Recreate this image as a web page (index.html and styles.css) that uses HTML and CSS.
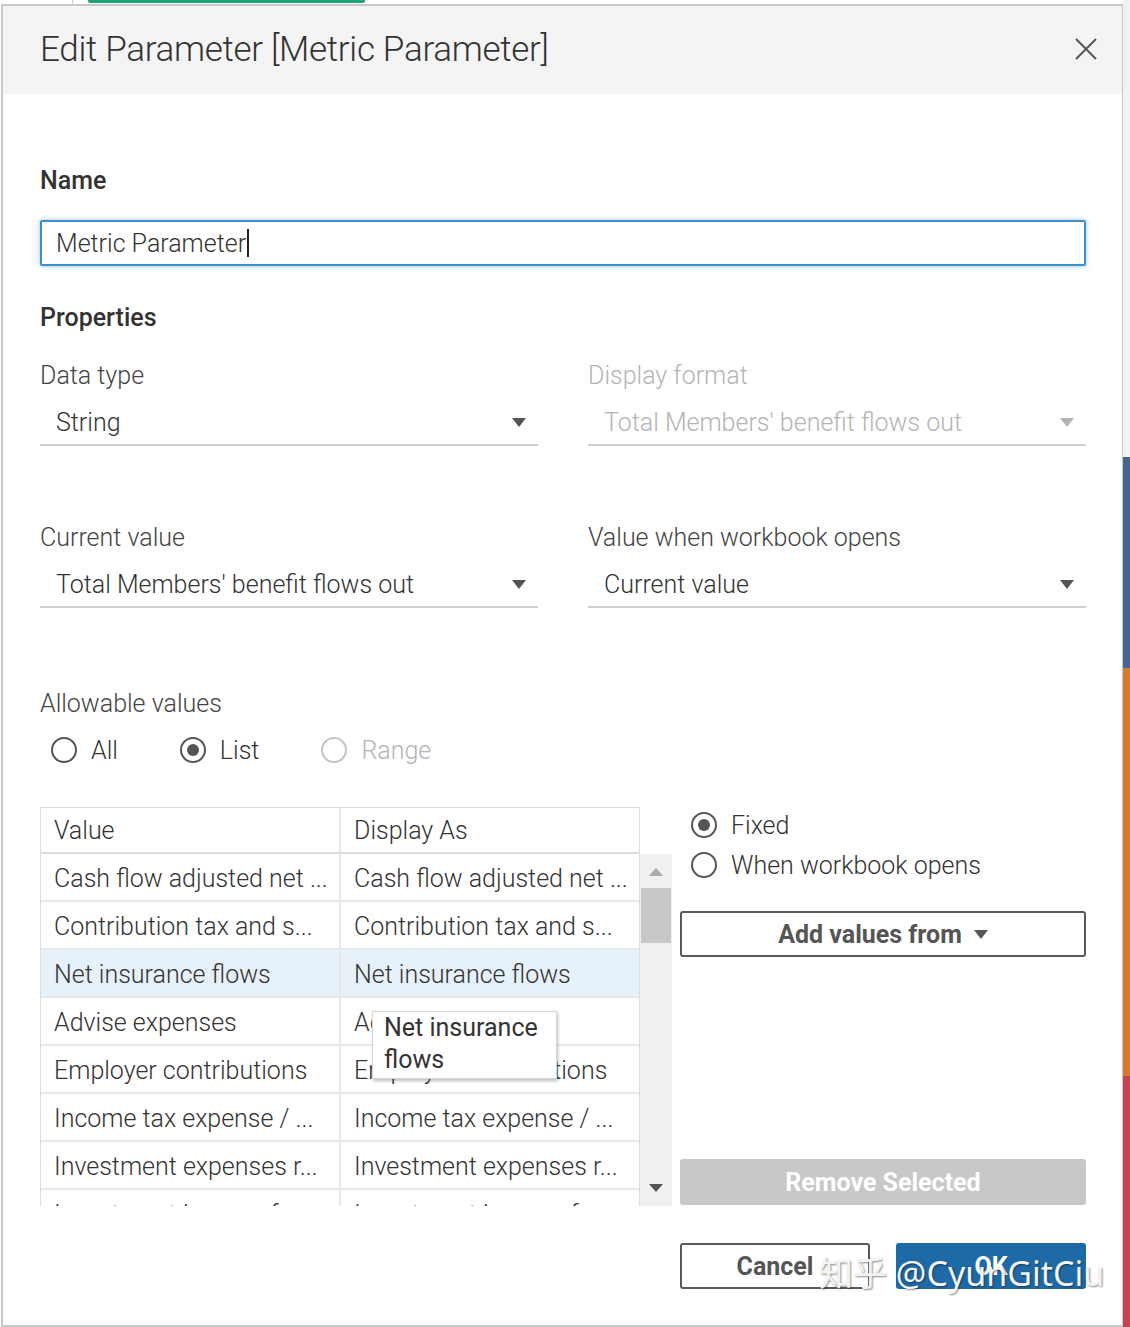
FILE: index.html
```html
<!DOCTYPE html>
<html lang="en">
<head>
    <meta charset="UTF-8">
    <title>Edit Parameter</title>
    <link rel="stylesheet" href="styles.css">
</head>
<body>
    <div class="backdrop-top">
        <div class="back-line"></div>
        <div class="back-tab"></div>
    </div>
    <div class="page">
        <div class="dialog">
            <div class="dialog-header">
                <h1>Edit Parameter [Metric Parameter]</h1>
                <svg class="close" width="24" height="24" viewBox="0 0 24 24">
                    <path d="M2 2 L22 22 M22 2 L2 22" stroke="#555" stroke-width="2" fill="none"/>
                </svg>
            </div>

            <div class="dialog-body">
                <div class="section-title name-title">Name</div>
                <div class="name-input">Metric Parameter<span class="caret"></span></div>

                <div class="section-title props-title">Properties</div>

                <div class="props-grid">
                    <div class="field">
                        <div class="field-label">Data type</div>
                        <div class="select">
                            <span>String</span>
                            <span class="arrow"></span>
                        </div>
                    </div>
                    <div class="field disabled">
                        <div class="field-label">Display format</div>
                        <div class="select">
                            <span>Total Members' benefit flows out</span>
                            <span class="arrow"></span>
                        </div>
                    </div>
                    <div class="field">
                        <div class="field-label">Current value</div>
                        <div class="select">
                            <span>Total Members' benefit flows out</span>
                            <span class="arrow"></span>
                        </div>
                    </div>
                    <div class="field">
                        <div class="field-label">Value when workbook opens</div>
                        <div class="select">
                            <span>Current value</span>
                            <span class="arrow"></span>
                        </div>
                    </div>
                </div>

                <div class="field-label allow-label">Allowable values</div>
                <div class="allow-radios">
                    <label class="radio"><span class="dot"></span>All</label>
                    <label class="radio checked"><span class="dot"></span>List</label>
                    <label class="radio disabled"><span class="dot"></span>Range</label>
                </div>

                <div class="list-area">
                    <div class="table-wrap">
                        <div class="values-table">
                            <div class="row head">
                                <div class="cell">Value</div>
                                <div class="cell">Display As</div>
                            </div>
                            <div class="row">
                                <div class="cell">Cash flow adjusted net ...</div>
                                <div class="cell">Cash flow adjusted net ...</div>
                            </div>
                            <div class="row">
                                <div class="cell">Contribution tax and s...</div>
                                <div class="cell">Contribution tax and s...</div>
                            </div>
                            <div class="row selected">
                                <div class="cell">Net insurance flows</div>
                                <div class="cell">Net insurance flows</div>
                            </div>
                            <div class="row">
                                <div class="cell">Advise expenses</div>
                                <div class="cell">Advise expenses</div>
                            </div>
                            <div class="row">
                                <div class="cell">Employer contributions</div>
                                <div class="cell">Employer contributions</div>
                            </div>
                            <div class="row">
                                <div class="cell">Income tax expense / ...</div>
                                <div class="cell">Income tax expense / ...</div>
                            </div>
                            <div class="row">
                                <div class="cell">Investment expenses r...</div>
                                <div class="cell">Investment expenses r...</div>
                            </div>
                            <div class="row">
                                <div class="cell">Investment income f...</div>
                                <div class="cell">Investment income f...</div>
                            </div>
                        </div>
                        <div class="scrollbar">
                            <span class="scroll-up"></span>
                            <span class="thumb"></span>
                            <span class="scroll-down"></span>
                        </div>
                        <div class="tooltip">Net insurance flows</div>
                    </div>

                    <div class="side">
                        <label class="radio checked"><span class="dot"></span>Fixed</label>
                        <label class="radio"><span class="dot"></span>When workbook opens</label>
                        <button class="btn outline add-btn">Add values from <span class="btn-arrow"></span></button>
                        <button class="btn grey remove-btn">Remove Selected</button>
                    </div>
                </div>

                <div class="footer">
                    <button class="btn outline">Cancel</button>
                    <button class="btn primary">OK</button>
                    <div class="watermark">知乎 @CyunGitCiu</div>
                </div>
            </div>
        </div>
        <div class="side-strip">
            <div class="strip-blank"></div>
            <div class="strip-blue"></div>
            <div class="strip-orange"></div>
            <div class="strip-red"></div>
        </div>
    </div>
</body>
</html>
```

FILE: styles.css
```css
body {
    margin: 0;
    font-family: Roboto, "Noto Sans CJK SC", sans-serif;
    color: #333;
    background: #fff;
    width: 1130px;
    height: 1327px;
    overflow: hidden;
}
.backdrop-top {
    height: 4px;
    position: relative;
}
.back-line {
    position: absolute;
    left: 72px;
    top: 0;
    width: 1px;
    height: 4px;
    background: #ccc;
}
.back-tab {
    position: absolute;
    left: 88px;
    top: 0;
    width: 277px;
    height: 3px;
    background: #1fa37a;
    border-radius: 0 0 2px 2px;
}
.page {
    display: flex;
    height: 1323px;
}
.dialog {
    width: 1122px;
    margin-left: 1px;
    border: 2px solid #c9c9c9;
    border-right-width: 1px;
    box-sizing: border-box;
    display: flex;
    flex-direction: column;
}
.dialog-header {
    height: 88px;
    background: #f4f4f4;
    display: flex;
    align-items: center;
    justify-content: space-between;
    padding: 0 24px 0 37px;
}
.dialog-header h1 {
    margin: 0;
    font-weight: 300;
    font-size: 35px;
    color: #333;
    letter-spacing: -0.3px;
    padding-bottom: 2px;
}
.close {
    margin-top: -2px;
}
.dialog-body {
    padding: 0 36px 0 37px;
    position: relative;
}
.section-title {
    font-size: 25px;
    font-weight: 500;
    line-height: 30px;
    color: #333;
}
.name-title {
    margin-top: 72px;
}
.name-input {
    margin-top: 24px;
    height: 46px;
    border: 2px solid #3d8fcb;
    border-radius: 2px;
    box-shadow: 0 0 5px rgba(61, 143, 203, 0.55);
    box-sizing: border-box;
    padding-left: 14px;
    font-size: 25px;
    line-height: 44px;
    font-weight: 300;
    color: #333;
}
.caret {
    display: inline-block;
    width: 2px;
    height: 28px;
    background: #222;
    vertical-align: -5px;
    margin-left: 1px;
}
.props-title {
    margin-top: 37px;
}
.props-grid {
    display: grid;
    grid-template-columns: 498px 498px;
    column-gap: 50px;
    row-gap: 77px;
    margin-top: 28px;
}
.field-label {
    font-size: 25px;
    line-height: 30px;
    font-weight: 300;
    color: #444;
}
.select {
    margin-top: 6px;
    height: 49px;
    border-bottom: 2px solid #cfcfcf;
    box-sizing: border-box;
    display: flex;
    align-items: center;
    justify-content: space-between;
    padding: 4px 12px 0 16px;
    font-size: 25px;
    font-weight: 300;
    color: #333;
}
.arrow {
    width: 0;
    height: 0;
    border-left: 7px solid transparent;
    border-right: 7px solid transparent;
    border-top: 9px solid #555;
}
.field.disabled .field-label,
.field.disabled .select {
    color: #b4b4b4;
}
.field.disabled .arrow {
    border-top-color: #b4b4b4;
}
.allow-label {
    margin-top: 81px;
}
.allow-radios {
    display: flex;
    margin-top: 16px;
    padding-left: 11px;
    height: 30px;
}
.radio {
    display: flex;
    align-items: center;
    font-size: 25px;
    font-weight: 300;
    color: #333;
    height: 30px;
}
.allow-radios .radio {
    margin-right: 62px;
}
.dot {
    width: 26px;
    height: 26px;
    border: 2px solid #555;
    border-radius: 50%;
    box-sizing: border-box;
    margin-right: 14px;
    display: flex;
    align-items: center;
    justify-content: center;
    background: #fff;
}
.radio.checked .dot::after {
    content: "";
    width: 12px;
    height: 12px;
    border-radius: 50%;
    background: #555;
}
.radio.disabled {
    color: #b4b4b4;
}
.radio.disabled .dot {
    border-color: #c4c4c4;
}
.list-area {
    display: flex;
    margin-top: 42px;
    height: 399px;
}
.table-wrap {
    position: relative;
    width: 632px;
    height: 399px;
    overflow: hidden;
    display: flex;
}
.values-table {
    width: 600px;
    border: 1px solid #dcdcdc;
    border-bottom: none;
    box-sizing: border-box;
    height: 399px;
    overflow: hidden;
}
.row {
    display: grid;
    grid-template-columns: 300px 299px;
    height: 48px;
    border-bottom: 2px solid #e8e8e8;
    box-sizing: border-box;
}
.row.head {
    height: 46px;
    border-bottom: 2px solid #dcdcdc;
}
.cell {
    padding: 3px 0 0 13px;
    font-size: 25px;
    font-weight: 300;
    line-height: 43px;
    color: #333;
    white-space: nowrap;
    overflow: hidden;
}
.row.head .cell {
    padding-top: 1px;
}
.cell:first-child {
    border-right: 2px solid #e8e8e8;
}
.row.selected {
    background: #e6f1f9;
}
.scrollbar {
    width: 32px;
    margin-top: 47px;
    background: #f0f0f0;
    position: relative;
}
.thumb {
    position: absolute;
    left: 1px;
    top: 34px;
    width: 30px;
    height: 55px;
    background: #c8c8c8;
}
.scroll-up,
.scroll-down {
    position: absolute;
    left: 9px;
    width: 0;
    height: 0;
    border-left: 7px solid transparent;
    border-right: 7px solid transparent;
}
.scroll-up {
    top: 14px;
    border-bottom: 8px solid #aaa;
}
.scroll-down {
    bottom: 14px;
    border-top: 8px solid #555;
}
.tooltip {
    position: absolute;
    left: 332px;
    top: 204px;
    width: 185px;
    height: 68px;
    box-sizing: border-box;
    background: #fff;
    border: 1px solid #d6d6d6;
    box-shadow: 1px 2px 3px rgba(0, 0, 0, 0.25);
    padding: 0 8px 0 11px;
    font-size: 25px;
    line-height: 32px;
    font-weight: 400;
    color: #333;
}
.side {
    margin-left: 8px;
    width: 406px;
    display: flex;
    flex-direction: column;
}
.side .radio {
    padding-left: 11px;
    height: 40px;
}
.side .radio:first-child {
    margin-top: -2px;
}
.btn {
    font-family: Roboto, sans-serif;
    height: 46px;
    box-sizing: border-box;
    font-size: 25px;
    font-weight: 700;
    border-radius: 3px;
    cursor: pointer;
}
.btn.outline {
    background: #fff;
    border: 2px solid #5a5a5a;
    color: #555;
}
.add-btn {
    margin-top: 26px;
    display: flex;
    align-items: center;
    justify-content: center;
}
.btn-arrow {
    display: inline-block;
    margin-left: 12px;
    border-left: 7px solid transparent;
    border-right: 7px solid transparent;
    border-top: 9px solid #555;
}
.btn.grey {
    margin-top: auto;
    margin-bottom: 1px;
    background: #c8c8c8;
    border: none;
    color: #fff;
}
.footer {
    margin-top: 37px;
    display: flex;
    justify-content: flex-end;
    gap: 26px;
    position: relative;
}
.footer .btn {
    width: 190px;
}
.btn.primary {
    background: #1e6aa6;
    border: none;
    color: #fff;
}
.watermark {
    position: absolute;
    left: 779px;
    top: 4px;
    font-family: "Noto Sans", "Noto Sans CJK SC", sans-serif;
    font-size: 34px;
    color: #f4f4f4;
    text-shadow: 1px 1px 2px rgba(0, 0, 0, 0.45);
    white-space: nowrap;
}
.side-strip {
    width: 7px;
    display: flex;
    flex-direction: column;
    margin-top: -4px;
    height: 1327px;
}
.strip-blank {
    height: 457px;
    background: #f2f2f2;
}
.strip-blue {
    height: 211px;
    background: #44678f;
}
.strip-orange {
    height: 408px;
    background: #d67b2a;
}
.strip-red {
    flex: 1;
    background: #c8424f;
}
```
